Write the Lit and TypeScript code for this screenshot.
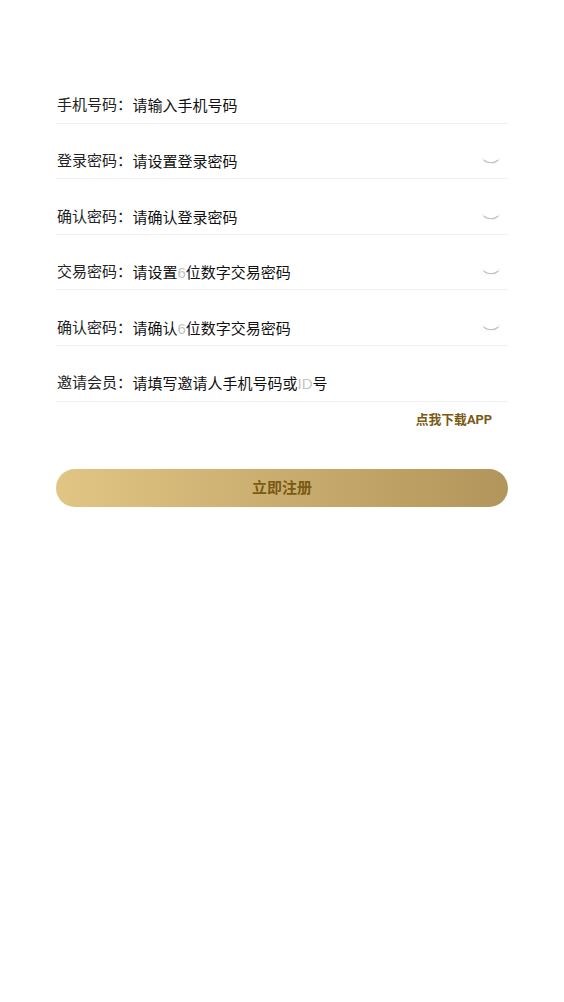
import { LitElement, html, css } from "lit";
import { customElement } from "lit/decorators.js";

const eye = html`<svg class="eye" viewBox="0 0 20 12" fill="none" stroke="#bdbdbd" stroke-width="1.2" stroke-linecap="round"><path d="M3 4.2C6 7.6 13.5 7.6 17 4.2"/><path d="M2.6 4L1.8 2.6M17.4 4L18.2 2.6M6 6.4L5.4 7.4M14 6.4L14.6 7.4" stroke="#e4e4e4" stroke-width="1"/></svg>`;
const d = (t: string) => html`<span class="thin">${t}</span>`;

const rows = [
  { label: "手机号码", value: html`请输入手机号码`, eye: false },
  { label: "登录密码", value: html`请设置登录密码`, eye: true },
  { label: "确认密码", value: html`请确认登录密码`, eye: true },
  { label: "交易密码", value: html`请设置${d("6")}位数字交易密码`, eye: true },
  { label: "确认密码", value: html`请确认${d("6")}位数字交易密码`, eye: true },
  { label: "邀请会员", value: html`请填写邀请人手机号码或${d("ID")}号`, eye: false },
];

@customElement("app-root")
export class AppRoot extends LitElement {
  static styles = css`
    :host {
      display: block;
      width: 564px;
      height: 1002px;
      background: #fff;
      overflow: hidden;
      font-family: "Roboto", "Noto Sans CJK SC", sans-serif;
      color: #1a1a1a;
    }
    .form {
      padding: 68px 56px 0;
    }
    .row {
      box-sizing: content-box;
      height: 49.35px;
      padding-bottom: 5.25px;
      border-bottom: 1px solid #f0f0f0;
      display: flex;
      align-items: flex-end;
      font-size: 15px;
      line-height: 22px;
    }
    .label {
      width: 76.5px;
      flex: none;
      padding-left: 1px;
      box-sizing: border-box;
      margin-bottom: 1px;
      white-space: nowrap;
      color: #222;
    }
    .value {
      flex: 1;
      white-space: nowrap;
      color: #111;
    }
    .thin {
      font-family: "Liberation Sans", sans-serif;
      font-weight: 400;
      color: #c4c4c4;
    }
    .eye {
      width: 20px;
      height: 12px;
      margin: 0 7px 5px 0;
      flex: none;
    }
    .download {
      display: flex;
      justify-content: flex-end;
      padding: 8px 16px 0 0;
      font-size: 12.8px;
      line-height: 20px;
      font-weight: 700;
      color: #7a5a14;
    }
    .btn {
      margin-top: 39px;
      height: 38px;
      box-sizing: border-box;
      padding-bottom: 3px;
      border-radius: 19px;
      background: linear-gradient(90deg, #e0c584, #b2955a);
      display: flex;
      align-items: center;
      justify-content: center;
      font-size: 15px;
      font-weight: 700;
      color: #7a5a14;
    }
  `;

  render() {
    return html`<div class="form">
      ${rows.map(
        (r) => html`<div class="row">
          <span class="label">${r.label}：</span>
          <span class="value">${r.value}</span>
          ${r.eye ? eye : ""}
        </div>`
      )}
      <div class="download">点我下载APP</div>
      <div class="btn">立即注册</div>
    </div>`;
  }
}
